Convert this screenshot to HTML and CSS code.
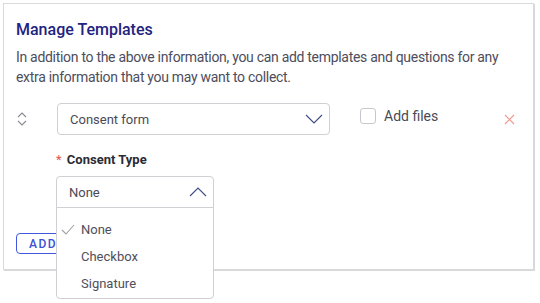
FILE: index.html
```html
<!DOCTYPE html>
<html lang="en">
<head>
    <meta charset="UTF-8">
    <meta name="viewport" content="width=device-width, initial-scale=1.0">
    <title>Manage Templates</title>
    <link rel="stylesheet" href="styles.css">
</head>
<body>
    <div class="panel">
        <h2>Manage Templates</h2>
        <p class="intro">In addition to the above information, you can add templates and questions for any extra information that you may want to collect.</p>

        <div class="template-row">
            <span class="sort-icon">
                <svg width="10" height="14" viewBox="0 0 10 14"><path d="M1 5 L5 1 L9 5 M1 9 L5 13 L9 9" fill="none" stroke="#8a8a96" stroke-width="1.1"/></svg>
            </span>
            <div class="select wide">
                <span>Consent form</span>
                <svg width="18" height="10" viewBox="0 0 18 10"><path d="M1 1 L9 9 L17 1" fill="none" stroke="#3d4a86" stroke-width="1.1"/></svg>
            </div>
            <label class="check">
                <span class="box"></span>
                <span>Add files</span>
            </label>
            <span class="remove">
                <svg width="11" height="11" viewBox="0 0 11 11"><path d="M1 1 L10 10 M10 1 L1 10" stroke="#f29a8e" stroke-width="1.2"/></svg>
            </span>
        </div>

        <div class="field">
            <div class="field-label"><span class="req">*</span> Consent Type</div>
            <div class="select-wrap">
                <div class="select open">
                    <span>None</span>
                    <svg width="18" height="10" viewBox="0 0 18 10"><path d="M1 9 L9 1 L17 9" fill="none" stroke="#3d4a86" stroke-width="1.1"/></svg>
                </div>
                <ul class="menu">
                    <li class="selected">
                        <svg width="14" height="11" viewBox="0 0 14 11"><path d="M1 6 L5 10 L13 1" fill="none" stroke="#a0a0a8" stroke-width="1.1"/></svg>
                        None
                    </li>
                    <li>Checkbox</li>
                    <li>Signature</li>
                </ul>
            </div>
        </div>

        <button type="button" class="add-btn">ADD TEMPLATE</button>
    </div>
</body>
</html>
```

FILE: styles.css
```css
html, body {
    min-height: 303px;
}
body {
    margin: 0;
    font-family: "Roboto", "Inter", sans-serif;
    background-color: #fff;
}
.panel {
    margin: 3px 0 0 3px;
    width: 531px;
    height: 267px;
    box-sizing: border-box;
    border: 1px solid #d9d9dc;
    box-shadow: 1px 1px 0 #d9d9dc;
    padding: 16px 12px;
}
h2 {
    margin: 0;
    font-size: 16px;
    line-height: 20px;
    font-weight: 500;
    color: #22237f;
}
.intro {
    margin: 7px 0 0;
    font-size: 14px;
    line-height: 20px;
    letter-spacing: -0.3px;
    color: #4d4d5c;
}
.template-row {
    display: flex;
    align-items: flex-start;
    margin-top: 16px;
    height: 32px;
}
.sort-icon {
    width: 40px;
    display: flex;
    padding: 9px 0 0 1px;
}
.select {
    display: flex;
    align-items: center;
    justify-content: space-between;
    box-sizing: border-box;
    height: 32px;
    padding: 0 6px 0 12px;
    border: 1px solid #cfcfd4;
    border-radius: 4px;
    font-size: 13px;
    color: #4a4a55;
    background-color: #fff;
}
.select.wide {
    width: 273px;
}
.check {
    display: flex;
    align-items: center;
    gap: 8px;
    margin: 5px 0 0 30px;
    font-size: 14px;
    color: #4a4a55;
}
.check .box {
    width: 14px;
    height: 14px;
    border: 1px solid #c8c8ce;
    border-radius: 3px;
}
.remove {
    display: flex;
    margin: 11px 0 0 auto;
    padding-right: 6px;
}
.field {
    margin: 15px 0 0 40px;
}
.field-label {
    font-size: 13px;
    line-height: 20px;
    font-weight: 700;
    color: #2b2b33;
}
.field-label .req {
    color: #e5554f;
    font-weight: 400;
    margin-right: 2px;
}
.select-wrap {
    position: relative;
    width: 158px;
    margin-top: 6px;
}
.select.open {
    border-radius: 4px 4px 0 0;
}
.menu {
    position: absolute;
    top: 31px;
    left: 0;
    right: 0;
    margin: 0;
    padding: 8px 0 1px;
    list-style: none;
    background-color: #fff;
    border: 1px solid #cfcfd4;
    border-radius: 0 0 4px 4px;
    z-index: 2;
}
.menu li {
    position: relative;
    height: 27px;
    line-height: 27px;
    padding-left: 24px;
    font-size: 13px;
    color: #4f4f5a;
}
.menu li svg {
    position: absolute;
    left: 4px;
    top: 8px;
}
.add-btn {
    margin-top: 25px;
    height: 21px;
    padding: 0 12px;
    border: 1px solid #4257e0;
    border-radius: 4px;
    background-color: #fff;
    color: #3c50d8;
    font-family: inherit;
    font-size: 12px;
    font-weight: 500;
    letter-spacing: 1.5px;
}
```
